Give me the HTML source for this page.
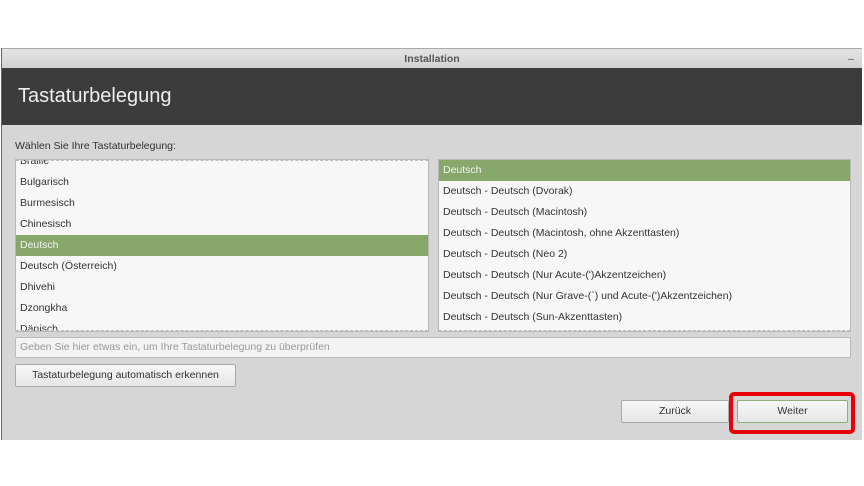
<!DOCTYPE html>
<html><head><meta charset="utf-8"><style>
*{box-sizing:border-box;margin:0;padding:0}
body{width:864px;height:486px;background:#fff;position:relative;overflow:hidden;font-family:"Liberation Sans",sans-serif;font-size:10.5px;color:#333}
.win{position:absolute;left:1px;top:48px;width:861px;height:392px;background:#d6d6d6;border-left:1px solid #3a6ea5}
.tb{position:absolute;left:0;top:0;width:100%;height:20px;background:linear-gradient(#e4e4e4,#d2d2d2);border-top:1px solid #aaa;text-align:center;font-weight:bold;color:#555;font-size:10.5px;line-height:20px}
.tb span{position:absolute;right:8px;top:0;font-weight:normal}
.hd{position:absolute;left:0;top:20px;width:100%;height:57px;background:#3c3c3c;color:#eee;font-size:20px;padding:17px 0 0 16px}
.lbl{position:absolute;left:13px;top:92px}
.list{position:absolute;top:111px;height:173px;background:#f7f7f7;border:1px solid #b8b8b8;overflow:hidden}
.list div{height:21px;line-height:21px;padding-left:4px;white-space:nowrap}
.sel{background:#87a86a;color:#f2f2f2}
.l1::before,.l1::after,.l2::after{content:"";position:absolute;left:0;right:0;border-top:1px dashed #bbb}
.l1::before{top:0}.l1::after,.l2::after{bottom:0}
.inp{position:absolute;left:13px;top:289px;width:836px;height:21px;background:#f3f3f3;border:1px solid #bbb;border-radius:2px;color:#999;padding-left:4px;line-height:19px}
.btn{position:absolute;height:23px;background:linear-gradient(#f7f7f7,#e6e6e6);border:1px solid #aaa;border-radius:2px;text-align:center;line-height:21px}
</style></head><body>
<div class="win">
<div class="tb">Installation<span>–</span></div>
<div class="hd">Tastaturbelegung</div>
<div class="lbl">Wählen Sie Ihre Tastaturbelegung:</div>
<div class="list l1" style="left:13px;width:414px">
<div style="margin-top:-9px">Braille</div><div>Bulgarisch</div><div>Burmesisch</div><div>Chinesisch</div><div class="sel">Deutsch</div><div>Deutsch (Österreich)</div><div>Dhivehi</div><div>Dzongkha</div><div>Dänisch</div>
</div>
<div class="list l2" style="left:436px;width:413px">
<div class="sel">Deutsch</div><div>Deutsch - Deutsch (Dvorak)</div><div>Deutsch - Deutsch (Macintosh)</div><div>Deutsch - Deutsch (Macintosh, ohne Akzenttasten)</div><div>Deutsch - Deutsch (Neo 2)</div><div>Deutsch - Deutsch (Nur Acute-(')Akzentzeichen)</div><div>Deutsch - Deutsch (Nur Grave-(`) und Acute-(')Akzentzeichen)</div><div>Deutsch - Deutsch (Sun-Akzenttasten)</div>
</div>
<div class="inp">Geben Sie hier etwas ein, um Ihre Tastaturbelegung zu überprüfen</div>
<div class="btn" style="left:13px;top:316px;width:221px">Tastaturbelegung automatisch erkennen</div>
<div class="btn" style="left:619px;top:352px;width:108px">Zurück</div>
<div style="position:absolute;left:727px;top:344px;width:126px;height:42px;border:4px solid #e8000b;border-radius:5px"></div>
<div class="btn" style="left:735px;top:352px;width:111px;border-color:#8fb07a">Weiter</div>
</div>
</body></html>
